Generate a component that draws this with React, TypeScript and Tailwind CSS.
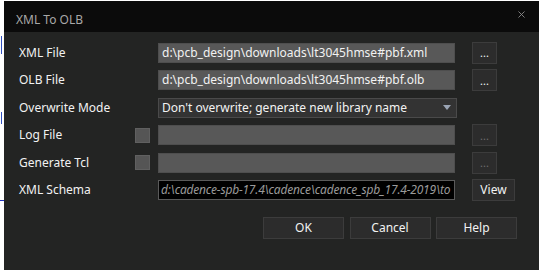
import { X } from 'lucide-react'

const font = { fontFamily: '"Segoe UI", "Noto Sans", "Liberation Sans", sans-serif' }

function Row({ label, check, children }: { label: string; check?: boolean; children: React.ReactNode }) {
  return (
    <div className="flex h-5 items-center">
      <div className="w-[116px] text-[12px] text-[#f2f2f2]">{label}</div>
      <div className="w-[23px]">
        {check && <div className="h-[15px] w-[15px] border border-[#606060] bg-[#555555]" />}
      </div>
      {children}
    </div>
  )
}

function Field({ value }: { value?: string }) {
  return (
    <div className="flex h-5 w-[297px] items-center overflow-hidden whitespace-nowrap border border-[#4e4e4e] bg-[#585858] px-[3px] text-[12px] text-[#f2f2f2]">
      {value}
    </div>
  )
}

function Dots({ disabled }: { disabled?: boolean }) {
  return (
    <div className={`ml-[17px] flex h-[22px] w-[25px] items-center justify-center border border-[#3c3c3c] bg-[#2c2c2c] text-[11px] leading-none ${disabled ? 'text-[#6e6e6e]' : 'text-[#f2f2f2]'}`}>
      ...
    </div>
  )
}

function Btn({ label }: { label: string }) {
  return (
    <div className="flex h-[22px] w-[81px] items-center justify-center border border-[#3c3c3c] bg-[#2c2c2c] text-[12px] text-[#f2f2f2]">
      {label}
    </div>
  )
}

export default function App() {
  return (
    <div className="relative flex h-[270px] w-[539px] bg-white pt-px" style={font}>
      {/* bits of the page behind the dialog */}
      <div className="absolute left-0 top-[200px] h-px w-[4px] bg-[#2030c0]" />
      <div className="absolute left-[1px] top-[36px] h-[18px] w-px bg-[#3050c0]" />
      <div className="absolute left-[1px] top-[112px] h-[12px] w-px bg-[#3050c0]" />

      <div className="ml-[4px] flex h-[269px] w-[535px] flex-col bg-[#232423]">
        {/* title bar */}
        <div className="flex h-[31px] items-center justify-between bg-[#0b0b0b] pl-[12px] pr-[12px] pt-[6px]">
          <span className="text-[12px] text-[#a8a8a8]">XML To OLB</span>
          <X className="mb-[10px] h-[11px] w-[11px] text-[#8a8a8a]" strokeWidth={2} />
        </div>

        {/* form */}
        <div className="flex flex-col gap-[7.6px] pl-[15px] pt-[10.5px]">
          <Row label="XML File">
            <Field value="d:\pcb_design\downloads\lt3045hmse#pbf.xml" />
            <Dots />
          </Row>
          <Row label="OLB File">
            <Field value="d:\pcb_design\downloads\lt3045hmse#pbf.olb" />
            <Dots />
          </Row>
          <Row label="Overwrite Mode">
            <div className="flex h-5 w-[299px] items-center justify-between border border-[#4a4a4a] bg-[#333333] pl-[3px] pr-[5px] text-[12px] text-[#f2f2f2]">
              <span>Don't overwrite; generate new library name</span>
              <svg width="8" height="5" viewBox="0 0 8 5">
                <path d="M0 0 L8 0 L4 5 Z" fill="#9aa4b4" />
              </svg>
            </div>
          </Row>
          <Row label="Log File" check>
            <Field />
            <Dots disabled />
          </Row>
          <Row label="Generate Tcl" check>
            <Field />
            <Dots disabled />
          </Row>
          <Row label="XML Schema">
            <div className="flex h-5 w-[297px] items-center overflow-hidden whitespace-nowrap border border-[#5a5a5a] bg-black px-[2px] text-[12px] italic tracking-[-0.2px] text-[#9a9a9a]">
              d:\cadence-spb-17.4\cadence\cadence_spb_17.4-2019\to
            </div>
            <div className="ml-[17px] flex h-[22px] w-[43px] items-center justify-center border border-[#3c3c3c] bg-[#2c2c2c] text-[12px] text-[#f2f2f2]">
              View
            </div>
          </Row>
        </div>

        {/* buttons */}
        <div className="mt-[17px] flex justify-end gap-[5.5px] pr-[22px]">
          <Btn label="OK" />
          <Btn label="Cancel" />
          <Btn label="Help" />
        </div>
      </div>
    </div>
  )
}
